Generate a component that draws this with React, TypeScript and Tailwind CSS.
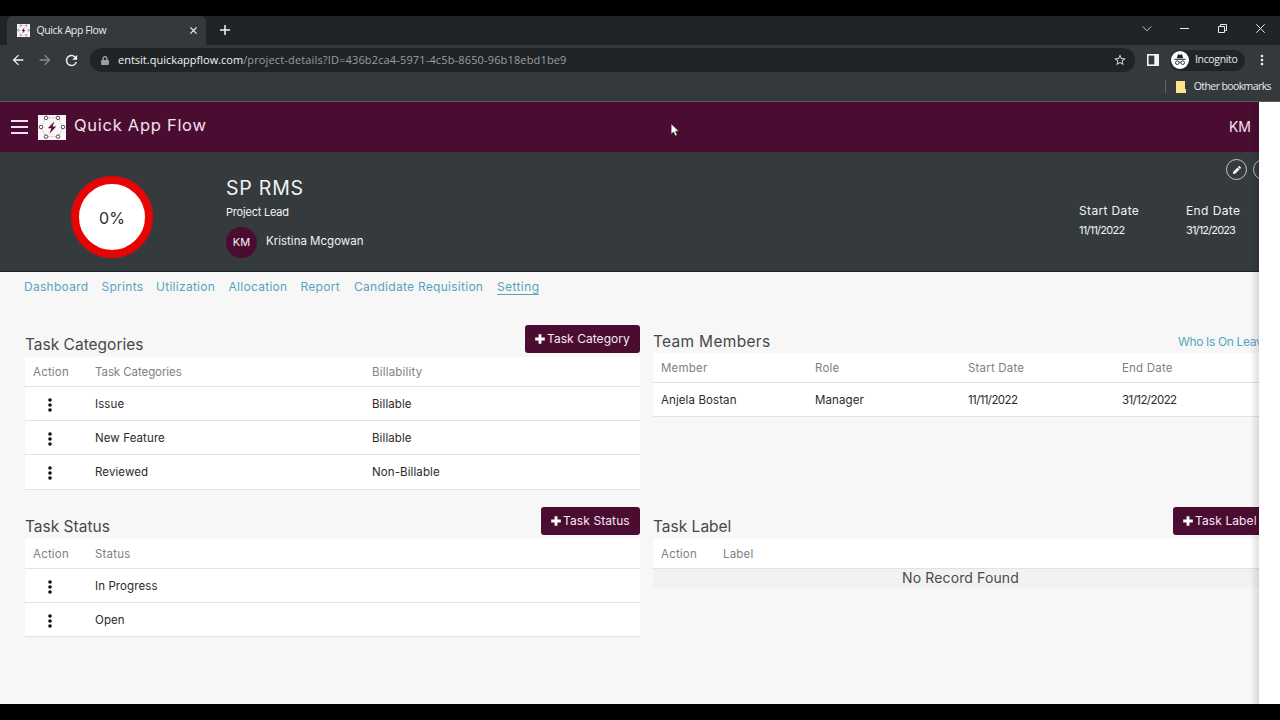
import type { ReactNode } from "react";
import { FaLock, FaPen } from "react-icons/fa";
import {
  MdArrowBack,
  MdArrowForward,
  MdMoreVert,
  MdRefresh,
  MdStarOutline,
} from "react-icons/md";

const tabs = [
  { label: "Dashboard", width: "w-[77.5px]" },
  { label: "Sprints", width: "w-[54.5px]" },
  { label: "Utilization", width: "w-[72.5px]" },
  { label: "Allocation", width: "w-[72px]" },
  { label: "Report", width: "w-[53.5px]" },
  { label: "Candidate Requisition", width: "w-[143px]" },
];

const categories = [
  { name: "Issue", billability: "Billable" },
  { name: "New Feature", billability: "Billable" },
  { name: "Reviewed", billability: "Non-Billable" },
];

const statuses = ["In Progress", "Open"];

function AppLogo({ className }: { className: string }) {
  const nodes = [
    [8, 3],
    [20, 3],
    [25, 12.5],
    [20, 22.5],
    [8, 22.5],
    [3, 12.5],
  ];

  return (
    <svg viewBox="0 0 28 26" preserveAspectRatio="none" className={className}>
      <rect width="28" height="26" fill="#fbf7f9" />
      <path d="M8 3H20L25 12.5L20 22.5H8L3 12.5Z" fill="none" stroke="#b9a9b1" strokeWidth="0.7" strokeDasharray="2 1" />
      {nodes.map(([cx, cy]) => (
        <circle key={`${cx}-${cy}`} cx={cx} cy={cy} r="1.8" fill="#fff" stroke="#55454d" strokeWidth="1" />
      ))}
      <path d="M16.5 6.5L9.8 13.8H13.4L11.4 19.6L18.3 11.9H14.5Z" fill="#5b0f35" />
    </svg>
  );
}

function IncognitoIcon() {
  return (
    <svg viewBox="0 0 18 18" className="h-[18px] w-[18px]">
      <circle cx="9" cy="9" r="9" fill="#fff" />
      <path d="M5.8 7.2L6.8 3.6Q7.2 3.2 7.8 3.5Q9 4 10.2 3.5Q10.8 3.2 11.2 3.6L12.2 7.2Z" fill="#202427" />
      <path d="M3.5 8.3H14.5" stroke="#202427" strokeWidth="1" />
      <circle cx="6.3" cy="11.7" r="1.8" fill="none" stroke="#202427" strokeWidth="0.9" />
      <circle cx="11.7" cy="11.7" r="1.8" fill="none" stroke="#202427" strokeWidth="0.9" />
      <path d="M8.1 11.4Q9 10.9 9.9 11.4" fill="none" stroke="#202427" strokeWidth="0.9" />
    </svg>
  );
}

function BrowserChrome() {
  return (
    <div className="h-[86px] shrink-0 bg-[#35393b] font-['Open_Sans','Noto_Sans',sans-serif] text-[11px] text-[#e8eaed]">
      <div className="flex h-[29px] bg-[#202427]">
        <div className="ml-[7px] flex w-[199px] items-center rounded-t-md bg-[#35393b] pr-[9px] pl-[10px]">
          <AppLogo className="h-[13px] w-[13px]" />
          <span className="ml-[6.5px] flex-1 text-[10.5px] tracking-[-0.4px]">Quick App Flow</span>
          <svg viewBox="0 0 8 8" className="h-[7px] w-[7px]" stroke="#f1f3f4" strokeWidth="1.4">
            <path d="M0.5 0.5L7.5 7.5M7.5 0.5L0.5 7.5" />
          </svg>
        </div>
        <svg viewBox="0 0 10 10" className="mt-[9px] ml-[14px] h-[10px] w-[10px]" stroke="#f1f3f4" strokeWidth="1.5">
          <path d="M5 0V10M0 5H10" />
        </svg>
        <div className="ml-auto flex items-center pr-[15px] pb-1">
          <svg viewBox="0 0 10 6" className="h-[6px] w-[10px]" fill="none" stroke="#c4c7c9" strokeWidth="1">
            <path d="M0.8 0.5L5 4.8L9.2 0.5" />
          </svg>
          <div className="ml-[28px] h-px w-[9px] bg-[#e8eaed]" />
          <svg viewBox="0 0 9 9" className="ml-[29px] h-[9px] w-[9px]" fill="none" stroke="#e8eaed" strokeWidth="1">
            <path d="M0.5 2.5H6.5V8.5H0.5ZM2.5 2.5V0.5H8.5V6.5H6.5" />
          </svg>
          <svg viewBox="0 0 9 9" className="ml-[29px] h-[9px] w-[9px]" stroke="#e8eaed" strokeWidth="1">
            <path d="M0.3 0.3L8.7 8.7M8.7 0.3L0.3 8.7" />
          </svg>
        </div>
      </div>

      <div className="flex h-[30px] items-center">
        <MdArrowBack className="ml-[10px] h-4 w-4 text-[#f1f3f4]" />
        <MdArrowForward className="ml-[11px] h-4 w-4 text-[#8a8d90]" />
        <MdRefresh className="ml-[10px] h-[17px] w-[17px] text-[#f1f3f4]" />
        <div className="ml-[10px] flex h-6 w-[1045px] items-center rounded-full bg-[#202427] pr-2 pl-[11px]">
          <FaLock className="h-[9px] w-[8px] text-[#9aa0a6]" />
          <span className="ml-[9px] flex-1 whitespace-nowrap text-[#9a9da0]">
            <span className="text-[#f1f3f4]">entsit.quickappflow.com</span>
            <span className="tracking-[0.15px]">/project-details?ID=436b2ca4-5971-4c5b-8650-96b18ebd1be9</span>
          </span>
          <MdStarOutline className="h-[14px] w-[14px] text-[#d5d7d9]" />
        </div>
        <svg viewBox="0 0 12 12" className="ml-[12px] h-3 w-3">
          <rect x="0.8" y="0.8" width="10.4" height="10.4" fill="none" stroke="#f1f3f4" strokeWidth="1.6" />
          <rect x="7.3" y="1" width="4" height="10" fill="#f1f3f4" />
        </svg>
        <div className="ml-[11px] flex h-[21px] w-[75px] items-center rounded-full bg-[#202427] pl-[1px]">
          <IncognitoIcon />
          <span className="ml-[6px] text-[10.5px] tracking-[-0.35px]">Incognito</span>
        </div>
        <MdMoreVert className="ml-[9px] h-[16px] w-[16px] text-[#f1f3f4]" />
      </div>

      <div className="flex h-[27px] items-center justify-end border-b border-[#585b5e] pr-[9px] pb-[3px]">
        <div className="h-[13px] w-px bg-[#606467]" />
        <svg viewBox="0 0 10 12" className="mr-[8px] ml-[10px] h-3 w-[10px]">
          <path d="M0 0H9V8H10V12H0Z" fill="#fbe58b" />
        </svg>
        <span className="text-[10.5px] tracking-[-0.6px]">Other bookmarks</span>
      </div>
    </div>
  );
}

function AppHeader() {
  return (
    <header className="flex h-[50px] shrink-0 items-center bg-[#4a0d31] text-[#f5e1ec]">
      <div className="ml-[11px] flex w-[17px] flex-col gap-[4px]">
        <span className="h-[2px] bg-current" />
        <span className="h-[2px] bg-current" />
        <span className="h-[2px] bg-current" />
      </div>
      <AppLogo className="ml-[10px] h-[25px] w-7" />
      <span className="ml-2 pb-[4px] text-[16.5px] tracking-[0.72px]">Quick App Flow</span>
      <span className="ml-auto pr-[8px] pb-[2px] text-[14px]">KM</span>
    </header>
  );
}

function ProjectSummary() {
  return (
    <section className="flex h-[120px] shrink-0 border-b border-[#1e2224] bg-[#353b3d] text-[#f1f3f3]">
      <div className="mt-6 ml-[71px] flex h-[82px] w-[82px] items-center justify-center rounded-full border-[8px] border-[#e60404] bg-white pt-px text-base text-[#2c2c2c]">
        0%
      </div>
      <div className="ml-[73px] pt-[22px]">
        <h1 className="text-[19.5px] leading-[28px] tracking-[0.8px]">SP RMS</h1>
        <p className="mt-[3px] text-[11px] leading-[14px] tracking-[-0.2px]">Project Lead</p>
        <div className="mt-[8px] flex items-center">
          <span className="flex h-[31px] w-[31px] items-center justify-center rounded-full bg-[#4a0d31] text-[11px]">KM</span>
          <span className="ml-[9px] pb-px text-[11.5px]">Kristina Mcgowan</span>
        </div>
      </div>
      <div className="ml-auto flex w-[180px] flex-col">
        <div className="mt-[7px] ml-[147px] flex gap-[6px]">
          <span className="flex h-[21px] w-[21px] shrink-0 items-center justify-center rounded-full border border-[#c5c9ca]">
            <FaPen className="h-[8px] w-[8px]" />
          </span>
          <span className="h-[21px] w-[21px] shrink-0 rounded-full border border-[#c5c9ca]" />
        </div>
        <div className="mt-[22px] flex">
          <div className="w-[107px]">
            <p className="text-[12px] leading-[18px] tracking-[0.35px]">Start Date</p>
            <p className="text-[11px] leading-[20px] tracking-[-0.75px]">11/11/2022</p>
          </div>
          <div>
            <p className="text-[12px] leading-[18px] tracking-[0.4px]">End Date</p>
            <p className="text-[11px] leading-[20px] tracking-[-0.85px]">31/12/2023</p>
          </div>
        </div>
      </div>
    </section>
  );
}

function ProjectTabs() {
  return (
    <nav className="flex h-[30px] items-center pl-6 text-[12px] tracking-[0.28px] whitespace-nowrap text-[#56a5bd]">
      {tabs.map((tab) => (
        <a key={tab.label} className={tab.width}>
          {tab.label}
        </a>
      ))}
      <a className="border-b border-[#56a5bd] leading-[14px] tracking-[0.4px]">Setting</a>
    </nav>
  );
}

function AddButton({ label, className }: { label: string; className: string }) {
  return (
    <button
      className={`flex h-[28px] items-center rounded-[3px] bg-[#4a0d31] pl-[10px] text-[12px] whitespace-nowrap text-[#f8e8f1] ${className}`}
    >
      <svg viewBox="0 0 10 10" className="mr-[2px] h-[10px] w-[10px] shrink-0" stroke="#fff" strokeWidth="2.8">
        <path d="M5 0.2V9.8M0.2 5H9.8" />
      </svg>
      {label}
    </button>
  );
}

function HeadRow({ columns, children }: { columns: string; children: ReactNode }) {
  return (
    <div className={`grid h-[30px] items-center border-b border-[#e2e2e2] bg-white pt-[2px] pl-2 text-[11.5px] tracking-[0.2px] text-[#818181] ${columns}`}>
      {children}
    </div>
  );
}

function Row({ columns, children }: { columns: string; children: ReactNode }) {
  return (
    <div className={`grid h-[34.2px] items-center border-b border-[#e2e2e2] bg-white pt-[2px] pl-2 text-[11.5px] tracking-[0.1px] text-[#2b2b2b] ${columns}`}>
      {children}
    </div>
  );
}

function RowMenu() {
  return (
    <svg viewBox="0 0 4 14" className="ml-[15px] h-[14px] w-1" fill="#111">
      <circle cx="2" cy="2" r="1.8" />
      <circle cx="2" cy="7" r="1.8" />
      <circle cx="2" cy="12" r="1.8" />
    </svg>
  );
}

function SectionTitle({ children }: { children: ReactNode }) {
  return <h2 className="text-[15.5px] leading-[20px] text-[#484848]">{children}</h2>;
}

export default function App() {
  const taskColumns = "grid-cols-[62px_277px_1fr]";
  const memberColumns = "grid-cols-[154px_153px_154px_1fr]";

  return (
    <div className="flex h-[720px] w-[1280px] flex-col overflow-hidden bg-black py-4 font-['Inter',sans-serif]">
      <BrowserChrome />
      <div className="relative flex min-h-0 flex-1 bg-white">
        <div className="relative flex w-[1259px] flex-col overflow-hidden bg-[#f7f7f7]">
          <AppHeader />
          <ProjectSummary />
          <ProjectTabs />

          <main className="mt-[22px] ml-[25px] grid w-[1243px] grid-cols-[615px_615px] grid-rows-[182px_auto] gap-x-[13px]">
            <section>
              <div className="flex h-[33px] justify-between">
                <div className="pt-[11px]">
                  <SectionTitle>Task Categories</SectionTitle>
                </div>
                <AddButton label="Task Category" className="mt-px w-[115px] tracking-[0.05px]" />
              </div>
              <HeadRow columns={taskColumns}>
                <span>Action</span>
                <span className="tracking-[-0.08px]">Task Categories</span>
                <span>Billability</span>
              </HeadRow>
              {categories.map((category) => (
                <Row key={category.name} columns={taskColumns}>
                  <RowMenu />
                  <span>{category.name}</span>
                  <span>{category.billability}</span>
                </Row>
              ))}
            </section>

            <section>
              <div className="flex h-[29px] justify-between pt-[8px]">
                <h2 className="text-[15.5px] leading-[20px] tracking-[0.3px] text-[#484848]">Team Members</h2>
                <a className="w-[90px] text-[12px] leading-[20px] tracking-[-0.35px] whitespace-nowrap text-[#56a5bd]">
                  Who Is On Leave
                </a>
              </div>
              <HeadRow columns={memberColumns}>
                <span>Member</span>
                <span>Role</span>
                <span>Start Date</span>
                <span>End Date</span>
              </HeadRow>
              <Row columns={memberColumns}>
                <span>Anjela Bostan</span>
                <span>Manager</span>
                <span className="tracking-[-0.6px]">11/11/2022</span>
                <span className="tracking-[-0.55px]">31/12/2022</span>
              </Row>
            </section>

            <section>
              <div className="flex h-[33px] justify-between">
                <div className="pt-[11px]">
                  <SectionTitle>Task Status</SectionTitle>
                </div>
                <AddButton label="Task Status" className="mt-px w-[99px] tracking-[0.1px]" />
              </div>
              <HeadRow columns={taskColumns}>
                <span>Action</span>
                <span>Status</span>
              </HeadRow>
              {statuses.map((status) => (
                <Row key={status} columns={taskColumns}>
                  <RowMenu />
                  <span>{status}</span>
                </Row>
              ))}
            </section>

            <section>
              <div className="flex h-[33px] justify-between">
                <div className="pt-[11px]">
                  <SectionTitle>Task Label</SectionTitle>
                </div>
                <AddButton label="Task Label" className="mt-px w-[95px] tracking-[0.1px]" />
              </div>
              <HeadRow columns={taskColumns}>
                <span>Action</span>
                <span>Label</span>
              </HeadRow>
              <div className="h-[19px] bg-[#f2f2f2] text-center text-[14px] leading-[18px] tracking-[0.12px] text-[#4a4a4a]">
                No Record Found
              </div>
            </section>
          </main>

          {/* shadow cast by the closed side panel */}
          <div className="absolute inset-y-0 right-0 w-[9px] bg-gradient-to-r from-transparent to-black/12" />
        </div>

        <svg viewBox="0 0 12 18" className="absolute top-[21px] left-[670px] h-[14px] w-[10px]">
          <path d="M1 1V14.5L4.2 11.6L6.3 16.6L8.8 15.5L6.7 10.7H11Z" fill="#fff" stroke="#222" strokeWidth="0.8" />
        </svg>
      </div>
    </div>
  );
}
